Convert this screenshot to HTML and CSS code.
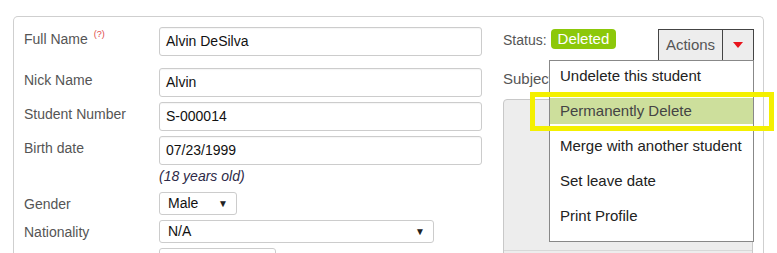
FILE: index.html
```html
<!DOCTYPE html>
<html>
<head>
<meta charset="utf-8">
<link rel="stylesheet" href="styles.css">
</head>
<body>
<div class="panel">
  <div class="form">
    <div class="row r1">
      <div class="label">Full Name <span class="help">(?)</span></div>
      <div class="input">Alvin DeSilva</div>
    </div>
    <div class="row r2">
      <div class="label">Nick Name</div>
      <div class="input">Alvin</div>
    </div>
    <div class="row">
      <div class="label">Student Number</div>
      <div class="input">S-000014</div>
    </div>
    <div class="row">
      <div class="label">Birth date</div>
      <div class="field">
        <div class="input">07/23/1999</div>
        <div class="age">(18 years old)</div>
      </div>
    </div>
    <div class="row">
      <div class="label">Gender</div>
      <div class="select gender"><span>Male</span><span class="arr">▼</span></div>
    </div>
    <div class="row">
      <div class="label">Nationality</div>
      <div class="select nat"><span>N/A</span><span class="arr">▼</span></div>
    </div>
    <div class="row">
      <div class="label"></div>
      <div class="select small"></div>
    </div>
  </div>
  <div class="side">
    <div class="status">
      <span class="st-label">Status:</span>
      <span class="badge">Deleted</span>
      <div class="actions">
        <span class="act-text">Actions</span>
        <span class="act-caret"></span>
      </div>
    </div>
    <div class="subject">Subjects</div>
    <div class="graybox">
      <div class="gb-line"></div>
    </div>
    <ul class="menu">
      <li>Undelete this student</li>
      <li class="hl">Permanently Delete</li>
      <li>Merge with another student</li>
      <li>Set leave date</li>
      <li>Print Profile</li>
    </ul>
  </div>
</div>
<div class="mark"></div>
</body>
</html>
```

FILE: styles.css
```css
html, body {
  margin: 0;
  padding: 0;
  background: #fff;
  height: 253px;
  overflow: hidden;
}
body {
  position: relative;
  font-family: "Liberation Sans", Arial, sans-serif;
  font-size: 14px;
  color: #555;
}
.panel {
  margin: 16px 0 0 13px;
  width: 751px;
  height: 237px;
  box-sizing: border-box;
  border: 1px solid #cfcfcf;
  border-bottom: none;
  border-radius: 5px 5px 0 0;
  display: flex;
  padding: 10px 0 0 10px;
  overflow: hidden;
}
.form {
  width: 458px;
  display: flex;
  flex-direction: column;
  gap: 5px;
}
.row {
  display: grid;
  grid-template-columns: 135px 323px;
}
.r2 { margin-top: 7px; }
.label {
  padding-top: 2px;
  line-height: 20px;
  height: 20px;
  color: #555;
}
.help {
  display: inline-block;
  color: #e04848;
  font-size: 9px;
  line-height: 10px;
  vertical-align: top;
  margin-left: 2px;
}
.input {
  height: 29px;
  box-sizing: border-box;
  border: 1px solid #ccc;
  border-radius: 3px;
  padding: 0 6px;
  line-height: 27px;
  color: #111;
  font-size: 14px;
  box-shadow: inset 0 1px 1px rgba(0,0,0,0.04);
}
.field { display: flex; flex-direction: column; }
.age {
  font-style: italic;
  color: #2e2a48;
  line-height: 21px;
  padding-top: 1px;
}
.select {
  height: 23px;
  box-sizing: border-box;
  border: 1px solid #ccc;
  border-radius: 3px;
  padding: 0 8px 0 8px;
  line-height: 21px;
  color: #111;
  display: flex;
  justify-content: space-between;
}
.select .arr { font-size: 10px; color: #222; }
.gender { width: 78px; }
.nat { width: 275px; }
.small { width: 117px; }
.side {
  position: relative;
  margin-left: 21px;
  width: 251px;
  padding-top: 2px;
}
.status {
  display: flex;
  align-items: flex-start;
  height: 31px;
}
.st-label { padding-top: 2px; line-height: 18px; }
.badge {
  margin-left: 4px;
  background: #8cc80a;
  color: #fff;
  font-size: 15px;
  height: 20px;
  line-height: 20px;
  padding: 0 7px;
  border-radius: 4px;
}
.actions {
  margin-left: auto;
  width: 96px;
  height: 32px;
  box-sizing: border-box;
  border: 1px solid #444;
  background: #ededed;
  display: flex;
}
.act-text {
  width: 63px;
  border-right: 1px solid #444;
  text-align: center;
  line-height: 30px;
  font-size: 15px;
  color: #555;
}
.act-caret {
  flex: 1;
  display: flex;
  align-items: center;
  justify-content: center;
}
.act-caret::before {
  content: "";
  border-left: 5px solid transparent;
  border-right: 5px solid transparent;
  border-top: 6px solid #e8141c;
}
.subject {
  margin-top: 10px;
  font-size: 15px;
  line-height: 18px;
  color: #555;
}
.graybox {
  margin-top: 11px;
  width: 250px;
  height: 160px;
  box-sizing: border-box;
  border: 1px solid #c8c8c8;
  border-radius: 4px;
  background: #ededed;
  position: relative;
}
.gb-line {
  position: absolute;
  left: 0;
  right: 0;
  top: 150px;
  border-top: 1px solid #d8d8d8;
}
.menu {
  position: absolute;
  top: 33px;
  right: 0;
  width: 205px;
  height: 182px;
  box-sizing: border-box;
  margin: 0;
  padding: 2px 0 0 0;
  list-style: none;
  background: #fff;
  border: 1px solid #888;
  font-size: 15px;
  color: #222;
}
.menu li {
  height: 26px;
  line-height: 26px;
  padding-left: 10px;
  margin-bottom: 9px;
}
.menu li.hl {
  background: #cddf9c;
  color: #444;
}
.mark {
  position: absolute;
  left: 530px;
  top: 92px;
  width: 244px;
  height: 39px;
  box-sizing: border-box;
  border: 5px solid #f4f000;
}
```
